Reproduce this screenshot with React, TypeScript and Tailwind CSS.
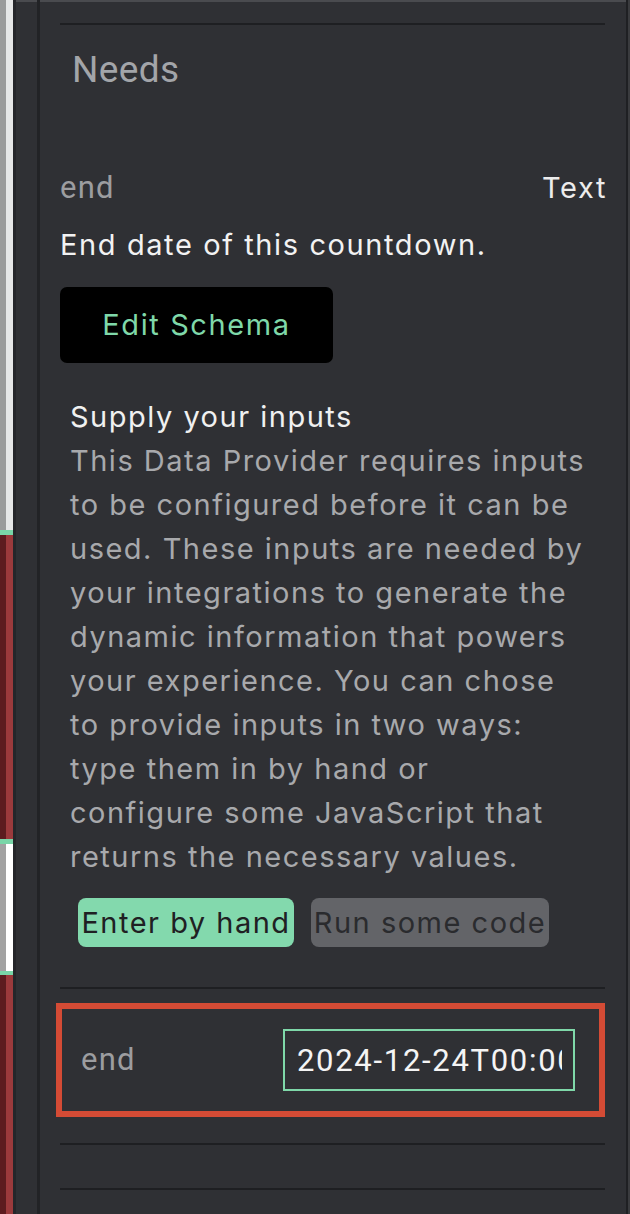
import React from "react";

const work = { fontFamily: "Inter, 'Open Sans', sans-serif" };
const rob = { fontFamily: "Roboto, 'Liberation Sans', sans-serif" };

function Stripe({ h, a, b }: { h: string; a: string; b: string }) {
  return (
    <div className={`flex ${h}`}>
      <div className={`w-[6px] ${a}`} />
      <div className={`w-[7px] ${b}`} />
    </div>
  );
}

const lines = [
  "This Data Provider requires inputs",
  "to be configured before it can be",
  "used. These inputs are needed by",
  "your integrations to generate the",
  "dynamic information that powers",
  "your experience. You can chose",
  "to provide inputs in two ways:",
  "type them in by hand or",
  "configure some JavaScript that",
  "returns the necessary values.",
];

export default function App() {
  return (
    <div className="flex h-[1214px] w-[630px] overflow-hidden bg-[#2f3034]">
      <div className="flex w-[13px] flex-col">
        <div className="flex h-[530px]">
          <div className="w-[6px] bg-[#9a9b9b]" />
          <div className="w-[7px] bg-[#e6e7e7]" />
        </div>
        <div className="h-[5px] bg-[#79d6a8]" />
        <Stripe h="h-[304px]" a="bg-[#5c1c1f]" b="bg-[#9b3a3c]" />
        <div className="h-[5px] bg-[#79d6a8]" />
        <Stripe h="h-[127px]" a="bg-[#a2a2a2]" b="bg-white" />
        <div className="h-[4px] bg-[#79d6a8]" />
        <Stripe h="h-[239px]" a="bg-[#5c1c1f]" b="bg-[#9b3a3c]" />
      </div>
      <div className="w-[3px] bg-[#25262a]" />
      <div className="w-[21px] border-t-2 border-[#4a4b4f] bg-[#2f3034]" />
      <div className="w-[3px] bg-[#222326]" />
      <div className="flex flex-1 flex-col border-t-2 border-[#4a4b4f] pl-[20px] pr-[21px]">
        <div className="mt-[21px] h-[2px] bg-[#1e1f22]" />
        <div
          className="flex h-[90px] items-center pl-[12px] text-[37px] tracking-[0.4px] text-[#a3a5a9]"
          style={rob}
        >
          Needs
        </div>
        <div
          className="mt-[51px] flex h-[44px] items-center justify-between text-[29px] tracking-[1.6px]"
          style={work}
        >
          <span className="text-[31px] tracking-[1.2px] text-[#9c9da0]" style={rob}>
            end
          </span>
          <span className="mr-[-2px] text-[#ececec]">Text</span>
        </div>
        <div
          className="mt-[13px] flex h-[44px] items-center whitespace-nowrap text-[29px] tracking-[1.6px] text-[#f2f2f2]"
          style={work}
        >
          End date of this countdown.
        </div>
        <div
          className="mt-[20px] flex h-[76px] w-[273px] items-center justify-center rounded-[7px] bg-black text-[29px] tracking-[1.6px] text-[#7fd8a9]"
          style={work}
        >
          Edit Schema
        </div>
        <div className="mt-[32px] pl-[10px] text-[29px] leading-[44px] tracking-[1.5px]" style={work}>
          <div className="whitespace-nowrap text-[#f0f0f0]">Supply your inputs</div>
          <p className="text-[#a8a9ac]">
            {lines.map((l, i) => (
              <span key={i} className="block whitespace-nowrap">
                {l}
              </span>
            ))}
          </p>
        </div>
        <div className="mt-[19px] flex gap-[17px] pl-[18px] text-[29px] tracking-[1.5px]" style={work}>
          <div className="flex h-[49px] w-[216px] items-center justify-center whitespace-nowrap rounded-[8px] bg-[#83d9ad] text-[#1f2023]">
            Enter by hand
          </div>
          <div className="flex h-[49px] w-[238px] items-center justify-center whitespace-nowrap rounded-[8px] bg-[#636468] text-[#2a2b2e]">
            Run some code
          </div>
        </div>
        <div className="mt-[40px] h-[2px] bg-[#1e1f22]" />
        <div className="ml-[-4px] mt-[14px] flex h-[114px] items-center justify-between border-[6px] border-[#d44b35] pl-[19px] pr-[24px]">
          <span className="text-[31px] tracking-[1.2px] text-[#9c9da0]" style={rob}>
            end
          </span>
          <input
            readOnly
            value="2024-12-24T00:00"
            className="h-[62px] w-[292px] border-2 border-[#7fd8a9] bg-transparent pl-[12px] pr-[11px] text-[31px] tracking-[1.7px] text-[#f4f4f4] outline-none"
            style={rob}
          />
        </div>
        <div className="mt-[26px] h-[2px] bg-[#1e1f22]" />
        <div className="mt-[43px] h-[2px] bg-[#1e1f22]" />
      </div>
      <div className="w-[2px] bg-[#1f2023]" />
      <div className="w-[2px] bg-[#3a3b3e]" />
    </div>
  );
}
